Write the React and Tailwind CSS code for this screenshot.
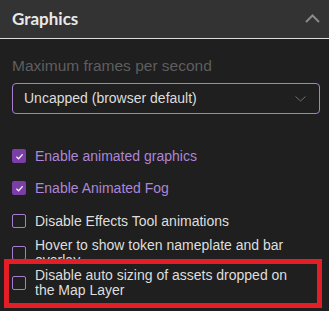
import React from "react";

const rows = [
  { label: "Enable animated graphics", checked: true },
  { label: "Enable Animated Fog", checked: true },
  { label: "Disable Effects Tool animations", checked: false },
];

function Box({ checked }) {
  if (checked) {
    return (
      <span className="flex h-[14px] w-[14px] shrink-0 items-center justify-center rounded-[2px] bg-[#7b3ea6]">
        <svg width="9" height="9" viewBox="0 0 10 10" fill="none">
          <path d="M1.5 5.2 L4 7.5 L8.5 2.5" stroke="#f2eaf8" strokeWidth="1.4" />
        </svg>
      </span>
    );
  }
  return <span className="h-[14px] w-[14px] shrink-0 rounded-[2px] border border-[#a77bcf]" />;
}

export default function App() {
  return (
    <div className="h-[311px] w-[329px] overflow-hidden bg-[#1f1f1f] font-['Liberation_Sans',Arial,sans-serif]">
      {/* Header */}
      <div className="flex h-[39px] items-center justify-between border-b border-[#dcdcdc] bg-[#333333] pl-3 pr-[9px]">
        <span className="font-['Lato',sans-serif] text-[17px] font-bold text-[#e9e9e9]">Graphics</span>
        <svg width="15" height="9" viewBox="0 0 15 9" fill="none" className="mb-[2px]">
          <path d="M1 8 L7.5 1.5 L14 8" stroke="#8a8a8a" strokeWidth="2" />
        </svg>
      </div>

      <div className="pl-3 pr-[9px]">
        <div className="mt-[18px] text-[15.5px] leading-[18px] text-[#5e5e5e]">Maximum frames per second</div>

        <div className="mt-[8px] flex h-[31px] items-center justify-between rounded-[4px] border border-[#a87fcf] pl-[11px] pr-[13px]">
          <span className="text-[14px] text-[#dddddd]">Uncapped (browser default)</span>
          <svg width="11" height="6" viewBox="0 0 11 6" fill="none">
            <path d="M0.5 0.5 L5.5 5 L10.5 0.5" stroke="#6e6e6e" strokeWidth="1" />
          </svg>
        </div>

        <div className="mt-[26px] flex flex-col">
          {rows.map((r, i) => (
            <div key={i} className={`flex h-[32px] items-center gap-[9px] ${i === 2 ? "mt-[1px]" : ""}`}>
              <Box checked={r.checked} />
              <span className={`text-[14px] ${r.checked ? "text-[#ad86d8]" : "text-[#dedede]"}`}>{r.label}</span>
            </div>
          ))}

          <div className="mt-[1px] flex h-[30px] items-center gap-[9px]">
            <Box checked={false} />
            <span className="pr-[22px] text-[14px] leading-[15px] text-[#dedede]">
              Hover to show token nameplate and bar overlay
            </span>
          </div>

          {/* highlighted row */}
          <div className="relative z-10 -mt-[9px] ml-[-8px] mr-[-2px] border-[5px] border-[#e41e26] bg-[#1f1f1f] pb-[5px] pl-[3px] pt-[4px]">
            <div className="flex h-[30px] items-center gap-[9px]">
              <Box checked={false} />
              <span className="pr-[22px] text-[14px] leading-[15px] text-[#dedede]">
                Disable auto sizing of assets dropped on the Map Layer
              </span>
            </div>
          </div>
        </div>
      </div>
    </div>
  );
}
